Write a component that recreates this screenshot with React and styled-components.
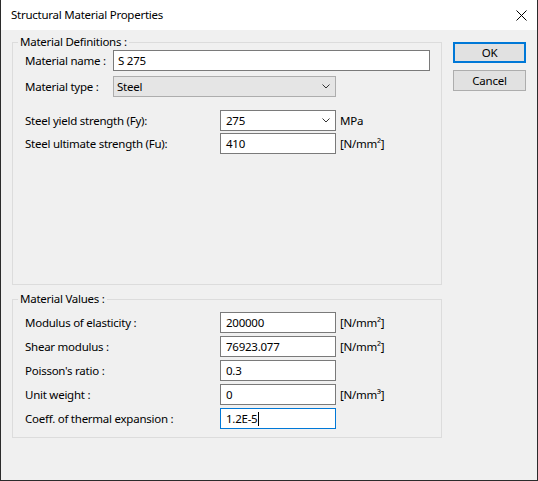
import React from 'react'
import styled, { createGlobalStyle } from 'styled-components'

const GlobalStyle = createGlobalStyle`
  html, body { margin: 0; padding: 0; background: #f0f0f0; }
  body {
    font-family: "Noto Sans", "Liberation Sans", sans-serif;
    font-size: 11.5px;
    letter-spacing: -0.25px;
    color: #000;
  }
  * { box-sizing: border-box; }
`

const Window = styled.div`
  width: 538px;
  height: 481px;
  background: #f0f0f0;
  border: 1px solid #2b2b2b;
  border-top: none;
  display: flex;
  flex-direction: column;
`

const TitleBar = styled.div`
  height: 30px;
  flex: none;
  background: #fff;
  display: flex;
  align-items: center;
  justify-content: space-between;
  padding: 0 10px 0 10px;
`

const Title = styled.div`
  line-height: 16px;
`

const Body = styled.div`
  flex: 1;
  display: flex;
  gap: 11px;
  padding: 4px 11px 0 11px;
`

const Column = styled.div`
  width: 430px;
  display: flex;
  flex-direction: column;
`

const Group = styled.fieldset`
  margin: ${p => p.$top || 0}px 0 0 0;
  padding: 0;
  border: 1px solid #dcdcdc;
  height: ${p => p.$h}px;
  min-width: 0;
`

const Legend = styled.legend`
  margin-left: 5px;
  padding: 0 2px;
  line-height: 16px;
`

const Rows = styled.div`
  padding: 0 10px 0 12px;
`

const Row = styled.div`
  display: flex;
  align-items: center;
  height: 21px;
  margin-top: ${p => p.$mt || 0}px;
`

const Label = styled.div`
  width: ${p => p.$w}px;
  flex: none;
  white-space: nowrap;
`

const Field = styled.div`
  width: ${p => p.$w}px;
  height: 21px;
  flex: none;
  display: flex;
  align-items: center;
  background: #fff;
  border: 1px solid ${p => (p.$focus ? '#0078d7' : '#7a7a7a')};
  padding-left: ${p => p.$pad || 5}px;
  white-space: nowrap;
`

const Combo = styled.div`
  width: ${p => p.$w}px;
  height: 21px;
  flex: none;
  display: flex;
  align-items: center;
  justify-content: space-between;
  background: ${p => (p.$disabled ? '#e5e5e5' : '#fff')};
  border: 1px solid ${p => (p.$disabled ? '#adadad' : '#7a7a7a')};
  padding: 0 5px 0 ${p => p.$pad || 5}px;
`

const Unit = styled.div`
  margin-left: 4px;
  white-space: nowrap;
`

const Caret = styled.span`
  display: inline-block;
  width: 1px;
  height: 14px;
  background: #000;
  margin-left: 1px;
`

const Buttons = styled.div`
  margin-top: 8px;
  display: flex;
  flex-direction: column;
  gap: 7px;
`

const Button = styled.button`
  width: 73px;
  height: 21px;
  padding: 0;
  font-family: inherit;
  font-size: inherit;
  letter-spacing: inherit;
  color: #000;
  background: #e1e1e1;
  border: ${p => (p.$default ? '2px solid #0078d7' : '1px solid #adadad')};
`

const Chevron = () => (
  <svg width="8" height="5" viewBox="0 0 8 5">
    <polyline points="0.5,0.5 4,4 7.5,0.5" fill="none" stroke="#333" strokeWidth="1" />
  </svg>
)

const CloseIcon = () => (
  <svg width="11" height="11" viewBox="0 0 11 11">
    <path d="M0.5 0.5 L10.5 10.5 M10.5 0.5 L0.5 10.5" stroke="#000" strokeWidth="1" />
  </svg>
)

const values = [
  { label: 'Modulus of elasticity :', value: '200000', unit: '[N/mm²]', mt: 5 },
  { label: 'Shear modulus :', value: '76923.077', unit: '[N/mm²]', mt: 3 },
  { label: "Poisson's ratio :", value: '0.3', mt: 3 },
  { label: 'Unit weight :', value: '0', unit: '[N/mm³]', mt: 3 },
  { label: 'Coeff. of thermal expansion :', value: '1.2E-5', mt: 3, focus: true },
]

export default function App() {
  return (
    <>
      <GlobalStyle />
      <Window>
        <TitleBar>
          <Title>Structural Material Properties</Title>
          <CloseIcon />
        </TitleBar>
        <Body>
          <Column>
            <Group $h={251}>
              <Legend>Material Definitions :</Legend>
              <Rows>
                <Row>
                  <Label $w={88}>Material name :</Label>
                  <Field $w={317} $pad={4}>S 275</Field>
                </Row>
                <Row $mt={5}>
                  <Label $w={88}>Material type :</Label>
                  <Combo $w={223} $pad={3} $disabled>
                    <span>Steel</span>
                    <Chevron />
                  </Combo>
                </Row>
                <Row $mt={13}>
                  <Label $w={195}>Steel yield strength (Fy):</Label>
                  <Combo $w={116}>
                    <span>275</span>
                    <Chevron />
                  </Combo>
                  <Unit>MPa</Unit>
                </Row>
                <Row $mt={2}>
                  <Label $w={195}>Steel ultimate strength (Fu):</Label>
                  <Field $w={116}>410</Field>
                  <Unit>[N/mm²]</Unit>
                </Row>
              </Rows>
            </Group>
            <Group $h={147} $top={6}>
              <Legend>Material Values :</Legend>
              <Rows>
                {values.map(v => (
                  <Row key={v.label} $mt={v.mt}>
                    <Label $w={195}>{v.label}</Label>
                    <Field $w={116} $focus={v.focus}>
                      {v.value}
                      {v.focus && <Caret />}
                    </Field>
                    {v.unit && <Unit>{v.unit}</Unit>}
                  </Row>
                ))}
              </Rows>
            </Group>
          </Column>
          <Buttons>
            <Button $default>OK</Button>
            <Button>Cancel</Button>
          </Buttons>
        </Body>
      </Window>
    </>
  )
}
